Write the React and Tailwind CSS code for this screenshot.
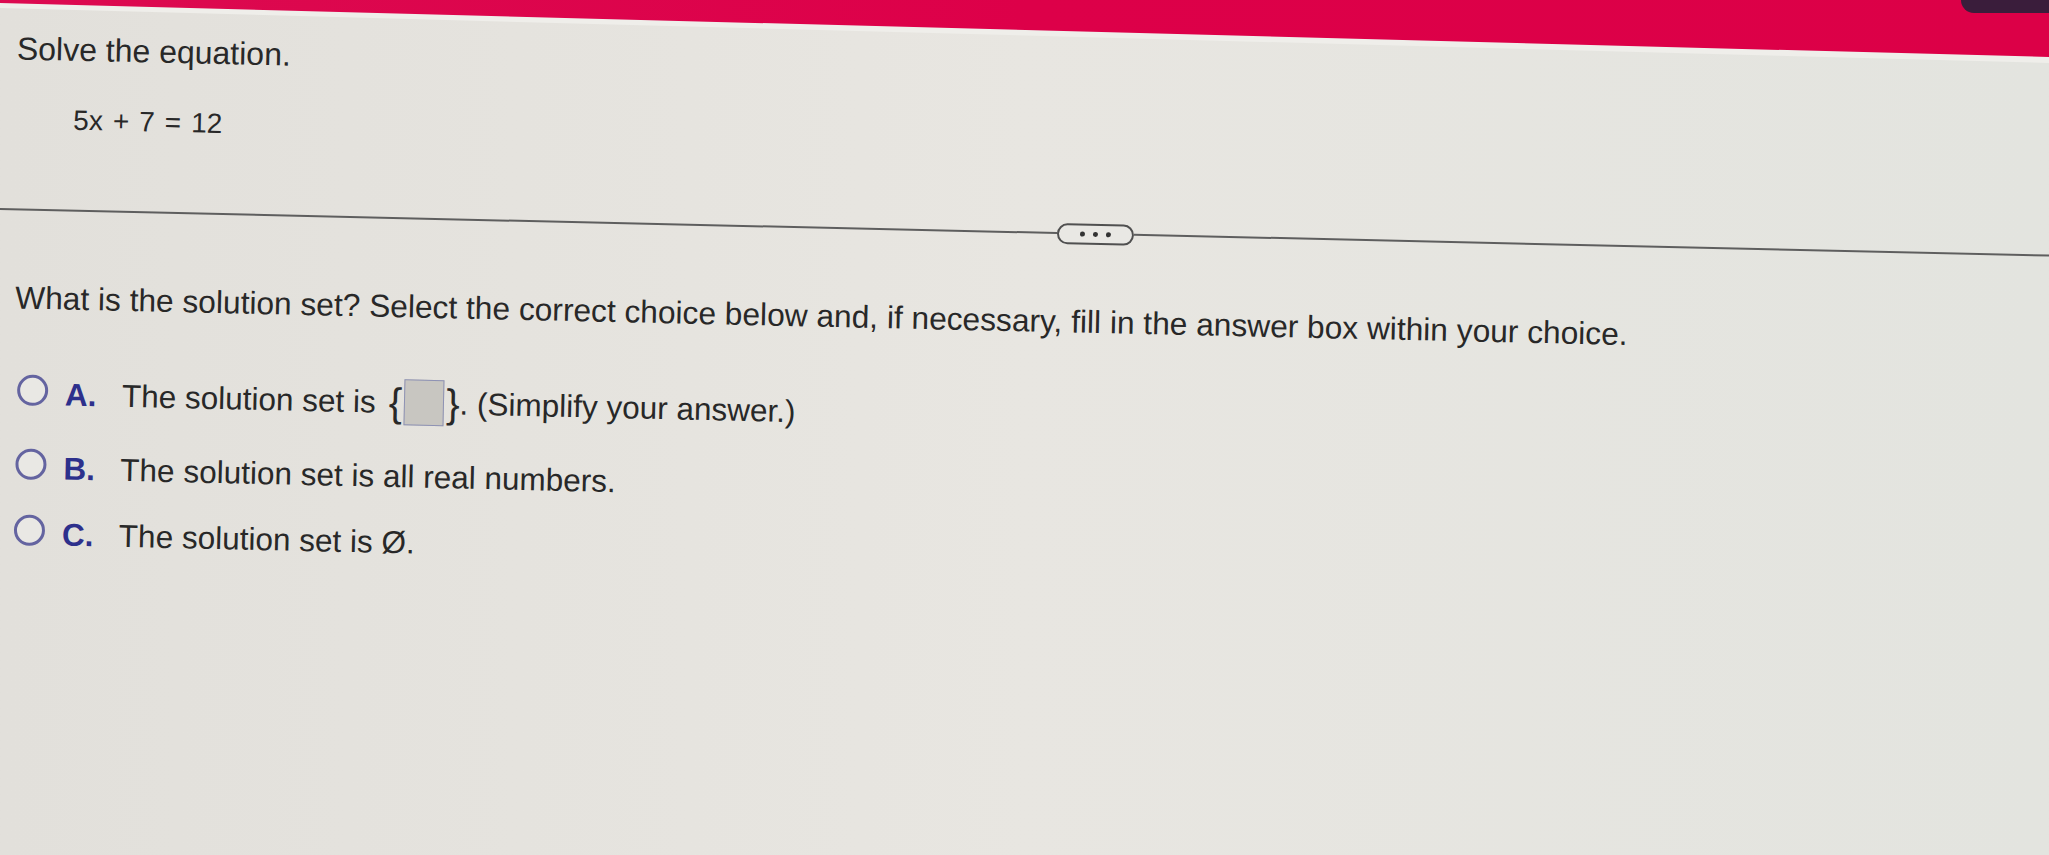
import React from 'react';

const font = { fontFamily: '"Liberation Sans", Arial, Helvetica, sans-serif' };

function Radio() {
  return (
    <span className="mb-[8px] box-border h-[31px] w-[31px] shrink-0 rounded-full border-[3px] border-[#6464a0] bg-[#e9e8e4]" />
  );
}

function Choice({ letter, children, className = '' }) {
  return (
    <div className={`flex h-[36px] items-center ${className}`}>
      <Radio />
      <span className="ml-[17px] w-[57px] text-[31.5px] font-bold leading-[36px] text-[#2d308c]">{letter}</span>
      <div className="flex items-center text-[31.5px] leading-[36px] text-[#282828]">{children}</div>
    </div>
  );
}

export default function App() {
  return (
    <div
      className="relative h-[855px] w-full overflow-hidden bg-gradient-to-r from-[#e2e0db] via-[#e8e6e1] to-[#e3e4df]"
      style={font}
    >
      {/* header strip, tilted as in the photo */}
      <div className="absolute left-0 right-0 top-0 h-[64px] bg-[#efeeea] [clip-path:polygon(0_0,100%_0,100%_63px,0_8px)]" />
      <div className="absolute left-0 right-0 top-0 h-[58px] bg-gradient-to-r from-[#dc0a50] via-[#dd0049] to-[#dc0047] [clip-path:polygon(0_0,100%_0,100%_57px,0_3px)]" />
      <div className="absolute right-0 top-0 h-[13px] w-[88px] rounded-bl-[18px] bg-[#3a1d3b]" />

      <div className="w-[2100px] origin-top-left rotate-[1.3deg]">
        <div className="pl-[18px] pt-[30px] text-[32px] leading-[36px] text-[#282828]">Solve the equation.</div>

        <div className="ml-[76px] mt-[38px] flex gap-[10px] text-[28px] leading-[30px] text-[#282828]">
          <span>5x</span>
          <span>+</span>
          <span>7</span>
          <span>=</span>
          <span>12</span>
        </div>

        <div className="mt-[65px] flex h-[20px] items-center">
          <div className="h-[2.5px] w-[1062px] bg-[#5e5e5e]" />
          <button className="flex h-[21px] w-[77px] items-center justify-center gap-[8px] rounded-full border-[2.5px] border-[#505050] bg-[#e9e8e4]">
            <span className="h-[5px] w-[5px] rounded-full bg-[#333333]" />
            <span className="h-[5px] w-[5px] rounded-full bg-[#333333]" />
            <span className="h-[5px] w-[5px] rounded-full bg-[#333333]" />
          </button>
          <div className="h-[2.5px] flex-1 bg-[#5e5e5e]" />
        </div>

        <div className="mt-[60px] pl-[22px] text-[31.7px] leading-[36px] text-[#282828]">
          What is the solution set? Select the correct choice below and, if necessary, fill in the answer box within your choice.
        </div>

        <div className="mt-[60px] flex flex-col pl-[26px]">
          <Choice letter="A.">
            <span>The solution set is</span>
            <span className="ml-[13px] flex items-center">
              <span className="text-[40px] font-light leading-[36px]">{'{'}</span>
              <span className="mx-[2px] box-border h-[46px] w-[40px] border border-[#8e92b4] bg-[#c8c6c1]" />
              <span className="text-[40px] font-light leading-[36px]">{'}'}</span>
            </span>
            <span>. (Simplify your answer.)</span>
          </Choice>
          <Choice letter="B." className="mt-[38px]">
            <span>The solution set is all real numbers.</span>
          </Choice>
          <Choice letter="C." className="mt-[30px]">
            <span>The solution set is Ø.</span>
          </Choice>
        </div>
      </div>
    </div>
  );
}
